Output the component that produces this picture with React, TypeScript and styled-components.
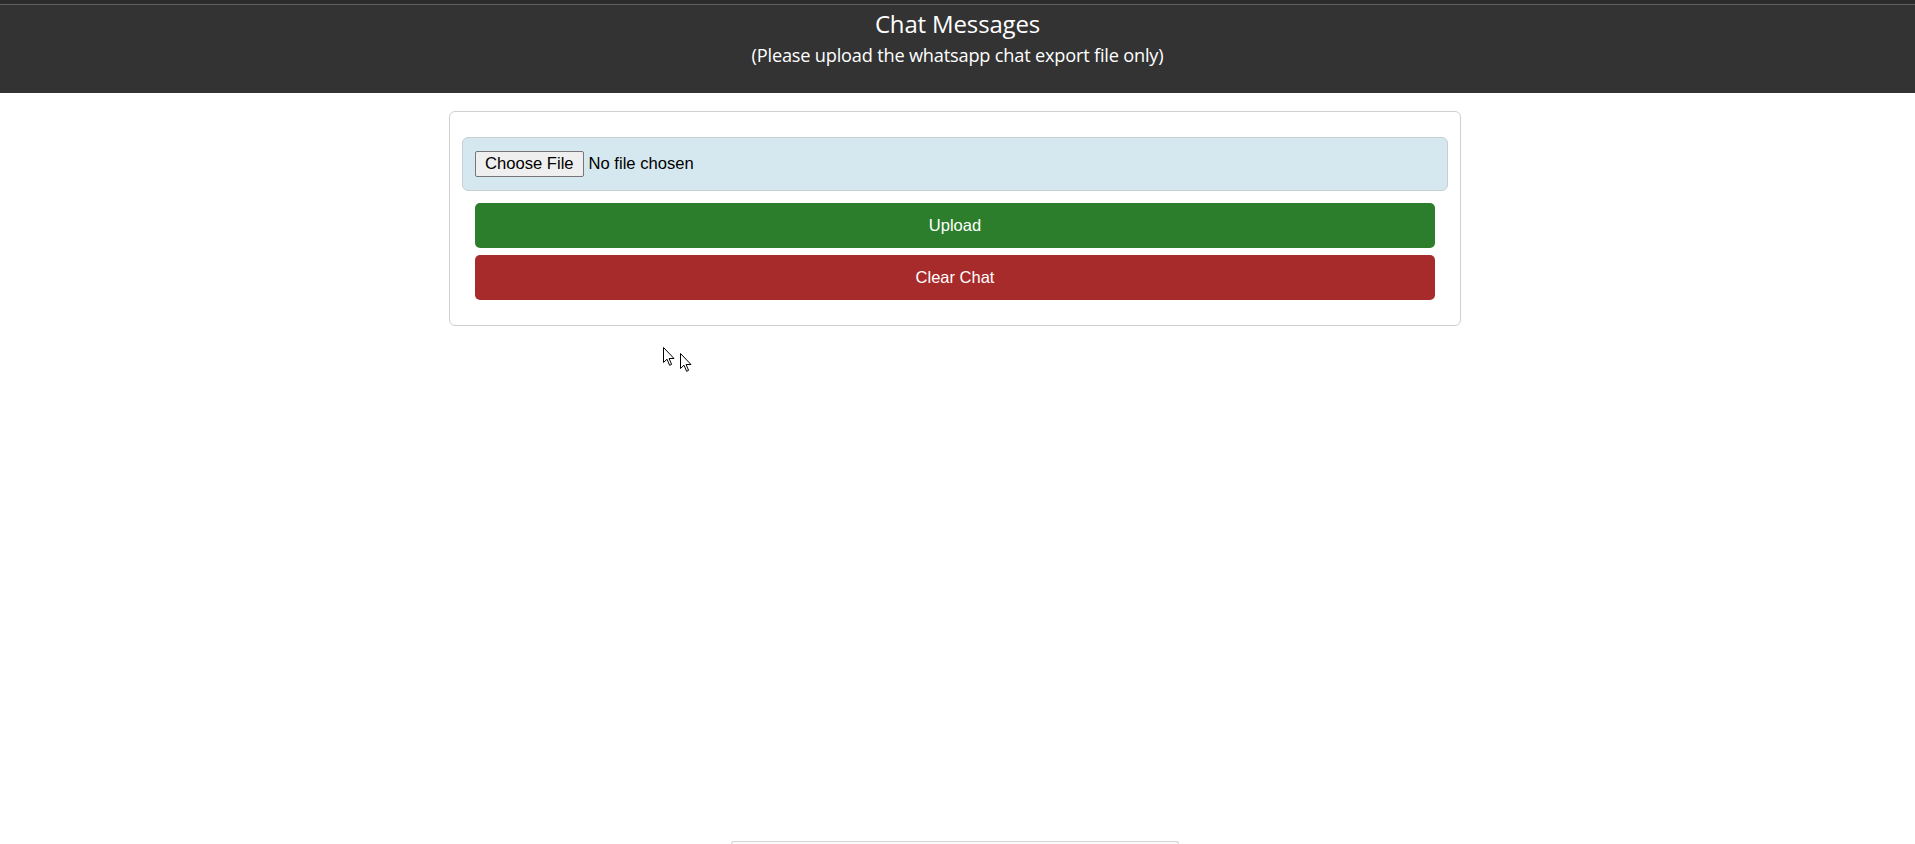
import React from "react";
import styled, { createGlobalStyle } from "styled-components";

const GlobalStyle = createGlobalStyle`
  html, body {
    margin: 0;
    padding: 0;
    background: #ffffff;
    font-family: "Liberation Sans", Arial, sans-serif;
  }
  * { box-sizing: border-box; }
`;

const Page = styled.div`
  position: relative;
  min-height: 844px;
  overflow: hidden;
`;

const Header = styled.header`
  background: #333333;
  border-top: 4px solid #2b2b2b;
  box-shadow: inset 0 1px 0 #5f5f5f;
  height: 93px;
  padding-top: 5px;
  display: flex;
  flex-direction: column;
  align-items: center;
  color: #ffffff;
  font-family: "Open Sans", "Noto Sans", sans-serif;
`;

const Title = styled.h1`
  margin: 0;
  font-size: 24px;
  font-weight: 400;
  line-height: 30px;
  letter-spacing: -0.15px;
`;

const Subtitle = styled.p`
  margin: 4px 0 0;
  font-size: 18.2px;
  font-weight: 400;
  line-height: 24px;
  letter-spacing: -0.2px;
`;

const Main = styled.main`
  display: flex;
  flex-direction: column;
  align-items: center;
  padding-right: 5px;
  padding-top: 18px;
`;

const Card = styled.section`
  width: 1012px;
  border: 1px solid #cfcfcf;
  border-radius: 6px;
  padding: 25px 12px;
  display: flex;
  flex-direction: column;
  gap: 12px;
`;

const FileBox = styled.div`
  height: 54px;
  background: #d5e8ef;
  border: 1px solid #c6d0d5;
  border-radius: 6px;
  padding: 0 12px;
  display: flex;
  align-items: center;
  gap: 5px;
  font-size: 16.5px;
  color: #000;
`;

const ChooseButton = styled.button`
  height: 26px;
  padding: 0 9px;
  background: #efefef;
  border: 1px solid #767676;
  border-radius: 2px;
  font-family: "Liberation Sans", Arial, sans-serif;
  font-size: 16.6px;
  color: #000;
  display: flex;
  align-items: center;
`;

const FileName = styled.span`
  font-size: 16.6px;
`;

const Actions = styled.div`
  display: flex;
  flex-direction: column;
  gap: 7px;
  padding: 0 13px 0 13px;
`;

const ActionButton = styled.button<{ $tone: "green" | "red" }>`
  height: 45px;
  width: 100%;
  border: none;
  border-radius: 5px;
  background: ${(p) => (p.$tone === "green" ? "#2c7e2c" : "#a82b2b")};
  color: #ffffff;
  font-family: "Liberation Sans", Arial, sans-serif;
  font-size: 16.5px;
  padding: 0 0 1px;
  cursor: pointer;
`;

const ChatArea = styled.div`
  height: 515px;
`;

const ChatBox = styled.div`
  width: 448px;
  height: 40px;
  border: 1px solid #d4d4d4;
  border-bottom: none;
  border-radius: 3px 3px 0 0;
  background: #fbfbfb;
`;

const Cursor = styled.svg<{ $x: number; $y: number }>`
  position: absolute;
  left: ${(p) => p.$x}px;
  top: ${(p) => p.$y}px;
  width: 12px;
  height: 19px;
  pointer-events: none;
`;

const Arrow = ({ x, y }: { x: number; y: number }) => (
  <Cursor $x={x} $y={y} viewBox="0 0 12 19">
    <path
      d="M0.5 0.5 L0.5 15.5 L4 12.2 L6.6 18.3 L8.6 17.4 L6.1 11.5 L11 11.5 Z"
      fill="#ffffff"
      stroke="#000000"
      strokeWidth="1"
      strokeLinejoin="miter"
    />
  </Cursor>
);

export default function App() {
  return (
    <Page>
      <GlobalStyle />
      <Header>
        <Title>Chat Messages</Title>
        <Subtitle>(Please upload the whatsapp chat export file only)</Subtitle>
      </Header>
      <Main>
        <Card>
          <FileBox>
            <ChooseButton type="button">Choose File</ChooseButton>
            <FileName>No file chosen</FileName>
          </FileBox>
          <Actions>
            <ActionButton $tone="green" type="button">Upload</ActionButton>
            <ActionButton $tone="red" type="button">Clear Chat</ActionButton>
          </Actions>
        </Card>
        <ChatArea />
        <ChatBox />
      </Main>
      <Arrow x={663} y={347} />
      <Arrow x={680} y={353} />
    </Page>
  );
}
